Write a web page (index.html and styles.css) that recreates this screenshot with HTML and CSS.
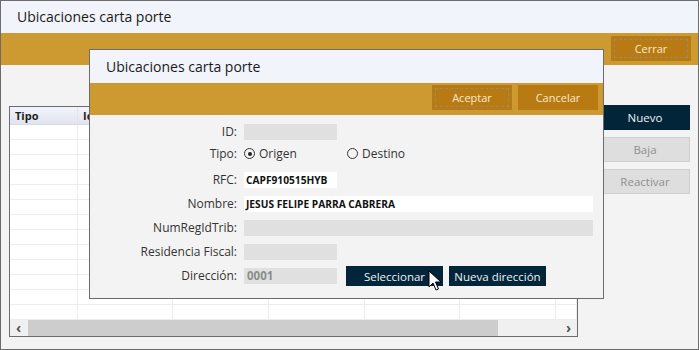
FILE: index.html
```html
<html>
<head>
	<link rel="stylesheet" href="styles.css">
</head>
<body>
<div class="win">
	<div class="win-title">Ubicaciones carta porte</div>
	<div class="toolbar">
		<button class="gbtn focus">Cerrar</button>
	</div>
	<div class="content">
		<div class="grid">
			<table class="gtable">
				<tr class="ghead"><th class="c1">Tipo</th><th class="c2">Id</th><th class="c3"></th><th class="c3"></th><th class="c2"></th><th class="c3"></th><th></th></tr>
				<tr><td></td><td></td><td></td><td></td><td></td><td></td><td></td></tr>
				<tr><td></td><td></td><td></td><td></td><td></td><td></td><td></td></tr>
				<tr><td></td><td></td><td></td><td></td><td></td><td></td><td></td></tr>
				<tr><td></td><td></td><td></td><td></td><td></td><td></td><td></td></tr>
				<tr><td></td><td></td><td></td><td></td><td></td><td></td><td></td></tr>
				<tr><td></td><td></td><td></td><td></td><td></td><td></td><td></td></tr>
				<tr><td></td><td></td><td></td><td></td><td></td><td></td><td></td></tr>
				<tr><td></td><td></td><td></td><td></td><td></td><td></td><td></td></tr>
				<tr><td></td><td></td><td></td><td></td><td></td><td></td><td></td></tr>
				<tr><td></td><td></td><td></td><td></td><td></td><td></td><td></td></tr>
				<tr><td></td><td></td><td></td><td></td><td></td><td></td><td></td></tr>
				<tr><td></td><td></td><td></td><td></td><td></td><td></td><td></td></tr>
				<tr><td></td><td></td><td></td><td></td><td></td><td></td><td></td></tr>
			</table>
			<div class="hscroll">
				<span class="arrow">&#8249;</span>
				<div class="track"><div class="thumb"></div></div>
				<span class="arrow">&#8250;</span>
			</div>
		</div>
		<div class="side">
			<button class="nbtn">Nuevo</button>
			<button class="dbtn">Baja</button>
			<button class="dbtn">Reactivar</button>
		</div>
	</div>

	<div class="modal">
		<div class="modal-title">Ubicaciones carta porte</div>
		<div class="toolbar mbar">
			<button class="gbtn focus">Aceptar</button>
			<button class="gbtn">Cancelar</button>
		</div>
		<div class="form">
			<label>ID:</label>
			<div class="ctl"><span class="inp off short"></span></div>

			<label class="up">Tipo:</label>
			<div class="ctl up">
				<span class="radio on"></span><span class="rtext">Origen</span>
				<span class="radio"></span><span class="rtext">Destino</span>
			</div>

			<label>RFC:</label>
			<div class="ctl"><span class="inp short">CAPF910515HYB</span></div>

			<label>Nombre:</label>
			<div class="ctl"><span class="inp long">JESUS FELIPE PARRA CABRERA</span></div>

			<label>NumRegIdTrib:</label>
			<div class="ctl"><span class="inp off long"></span></div>

			<label>Residencia Fiscal:</label>
			<div class="ctl"><span class="inp off short"></span></div>

			<label>Dirección:</label>
			<div class="ctl">
				<span class="inp off short grey">0001</span>
				<button class="nbtn sel">Seleccionar</button>
				<button class="nbtn nueva">Nueva dirección</button>
			</div>
		</div>
	</div>

	<svg class="cursor" width="14" height="22" viewBox="0 0 14 22">
		<path d="M1 1 L1 17 L5 13 L8 20 L10.5 19 L7.5 12 L13 12 Z" fill="#fff" stroke="#000" stroke-width="1" stroke-linejoin="round"/>
	</svg>
</div>
</body>
</html>
```

FILE: styles.css
```css
body {
	margin: 0;
	font-family: "Open Sans", "Noto Sans", sans-serif;
	color: #222;
}
button {
	font-family: "Open Sans", "Noto Sans", sans-serif;
	cursor: default;
}

.win {
	position: relative;
	width: 699px;
	height: 350px;
	box-sizing: border-box;
	border: 1px solid #6c6c6c;
	background: #f3f3f3;
	overflow: hidden;
}
.win-title {
	height: 32px;
	line-height: 32px;
	padding-left: 16px;
	background: #f1f4fb;
	font-size: 14px;
	color: #1a1a1a;
}

.toolbar {
	height: 32px;
	box-sizing: border-box;
	background: #cc9a31;
	display: flex;
	justify-content: flex-end;
	gap: 6px;
	padding: 3px 7px 0 0;
}
.gbtn {
	width: 80px;
	height: 25px;
	background: #b87a12;
	border: 0;
	color: #f7ead0;
	font-size: 11px;
	padding: 0;
	position: relative;
}
.gbtn.focus::after {
	content: "";
	position: absolute;
	left: 3px; top: 3px; right: 3px; bottom: 3px;
	border: 1px dashed #9a8a70;
}

.content {
	display: flex;
	align-items: flex-start;
	height: 284px;
	box-sizing: border-box;
	padding: 40px 0 0 8px;
}

.grid {
	width: 569px;
	height: 231px;
	margin-top: 1px;
	box-sizing: border-box;
	border: 1px solid #6c6c6c;
	background: #fff;
	display: flex;
	flex-direction: column;
	overflow: hidden;
}
.gtable {
	border-collapse: collapse;
	table-layout: fixed;
	width: 100%;
	flex: 1;
}
.gtable tr { height: 15px; }
.gtable tr.ghead { height: 17px; }
.gtable th {
	text-align: left;
	font-size: 11px;
	font-weight: bold;
	padding: 0 0 0 5px;
	background: linear-gradient(#f3f4fa, #e1e4ef);
	border-right: 1px solid #e4e4e4;
	border-bottom: 1px solid #d8dae2;
	color: #222;
}
.gtable .c1 { width: 62px; }
.gtable .c2 { width: 89px; }
.gtable .c3 { width: 90px; }
.gtable td {
	border-right: 1px solid #ececec;
	border-bottom: 1px solid #ececec;
	padding: 0;
}
.hscroll {
	height: 16px;
	display: flex;
	align-items: center;
	background: #f0f0f0;
}
.hscroll .arrow {
	width: 17px;
	text-align: center;
	font-size: 14px;
	line-height: 16px;
	color: #555;
	font-weight: bold;
}
.track {
	flex: 1;
	height: 16px;
}
.thumb {
	width: 470px;
	height: 16px;
	margin-left: 1px;
	background: #cdcdcd;
}

.side {
	margin-left: 22px;
	display: flex;
	flex-direction: column;
	gap: 7px;
}
.nbtn {
	background: #022539;
	color: #eef2f5;
	border: 0;
	font-size: 11.5px;
	padding: 0;
}
.side .nbtn {
	width: 90px;
	height: 25px;
}
.dbtn {
	width: 90px;
	height: 25px;
	background: #dedede;
	border: 1px solid #cfcfcf;
	color: #909090;
	font-size: 11.5px;
	padding: 0;
}

.modal {
	position: absolute;
	left: 88px;
	top: 48px;
	width: 515px;
	height: 250px;
	box-sizing: border-box;
	border: 1px solid #6c6c6c;
	background: #f3f3f3;
}
.modal-title {
	height: 33px;
	line-height: 33px;
	padding-left: 16px;
	background: #f1f4fb;
	font-size: 14px;
	color: #1a1a1a;
}
.mbar {
	padding: 2px 5px 0 0;
}
.mbar .gbtn { width: 80px; }

.form {
	display: grid;
	grid-template-columns: 147px 1fr;
	grid-auto-rows: 24px;
	column-gap: 7px;
	padding-top: 5px;
	font-size: 12px;
}
.form label {
	text-align: right;
	line-height: 24px;
	color: #333;
}
.form .up {
	margin-top: -5px;
	line-height: 29px;
}
.ctl {
	display: flex;
	align-items: center;
}
.inp {
	height: 16px;
	line-height: 16px;
	background: #fff;
	font-size: 10.2px;
	font-weight: bold;
	padding-left: 2px;
	box-sizing: border-box;
	color: #111;
	overflow: hidden;
	white-space: nowrap;
}
.inp.off { background: #e0e0e0; }
.inp.short { width: 93px; }
.inp.long { width: 349px; }
.inp.grey { color: #8c8c8c; font-size: 11.5px; padding-left: 3px; }

.radio {
	width: 9px;
	height: 9px;
	border: 1.5px solid #333;
	border-radius: 50%;
	box-sizing: content-box;
	position: relative;
}
.radio.on::after {
	content: "";
	position: absolute;
	left: 2.5px; top: 2.5px;
	width: 4px; height: 4px;
	border-radius: 50%;
	background: #222;
}
.rtext {
	margin-left: 4px;
	width: 88px;
	font-size: 12px;
	color: #333;
}

.nbtn.sel {
	width: 97px;
	height: 20px;
	margin-left: 9px;
}
.nbtn.nueva {
	width: 97px;
	height: 20px;
	margin-left: 6px;
}

.cursor {
	position: absolute;
	left: 427px;
	top: 269px;
}
```
